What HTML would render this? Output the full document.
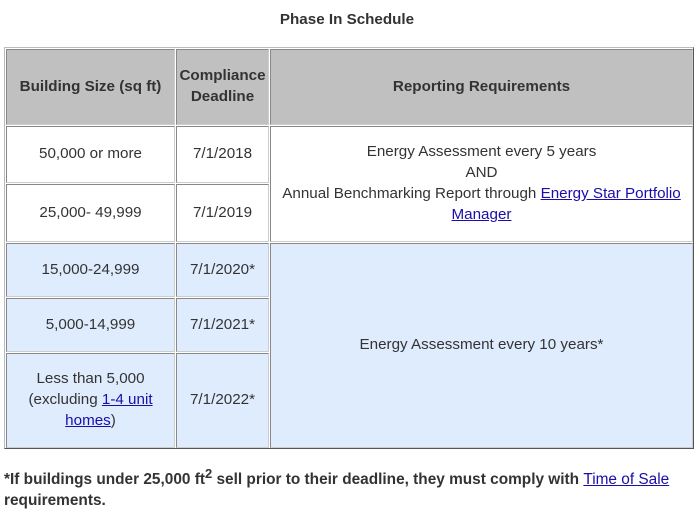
<!DOCTYPE html>
<html><head><style>
body{margin:0;background:#fff;font-family:"Liberation Sans",Arial,sans-serif;color:#333;width:700px;height:520px;position:relative;overflow:hidden}
.t{position:absolute;left:4px;top:47px;width:688px;height:400px;border:1px solid;border-color:#bbb #555 #555 #bbb}
.c{position:absolute;box-sizing:border-box;border:1px solid;border-color:#888 #ccc #ccc #888;display:flex;align-items:center;justify-content:center;text-align:center;font-size:15.2px;line-height:21px}
.c>div{width:100%;margin-top:-2px}
.h{background:#c0c0c0;font-weight:bold;color:#333}
.w{background:#fff}
.b{background:#dfecfe}
a{color:#1a0dab;text-decoration:underline}
</style></head><body>
<div style="position:absolute;left:0;width:694px;top:11px;text-align:center;font-weight:bold;font-size:15.2px">Phase In Schedule</div>
<div class="t"></div>
<div class="c h" style="left:6px;top:49px;width:169px;height:76px"><div>Building Size (sq ft)</div></div>
<div class="c h" style="left:176px;top:49px;width:93px;height:76px"><div>Compliance<br>Deadline</div></div>
<div class="c h" style="left:270px;top:49px;width:423px;height:76px"><div>Reporting Requirements</div></div>

<div class="c w" style="left:6px;top:126px;width:169px;height:57px"><div>50,000 or more</div></div>
<div class="c w" style="left:176px;top:126px;width:93px;height:57px"><div>7/1/2018</div></div>
<div class="c w" style="left:6px;top:184px;width:169px;height:58px"><div>25,000- 49,999</div></div>
<div class="c w" style="left:176px;top:184px;width:93px;height:58px"><div>7/1/2019</div></div>
<div class="c w" style="left:270px;top:126px;width:423px;height:116px"><div>Energy Assessment every 5 years<br>AND<br>Annual Benchmarking Report through <a>Energy Star Portfolio</a><br><a>Manager</a></div></div>

<div class="c b" style="left:6px;top:243px;width:169px;height:54px"><div>15,000-24,999</div></div>
<div class="c b" style="left:176px;top:243px;width:93px;height:54px"><div>7/1/2020*</div></div>
<div class="c b" style="left:6px;top:298px;width:169px;height:54px"><div>5,000-14,999</div></div>
<div class="c b" style="left:176px;top:298px;width:93px;height:54px"><div>7/1/2021*</div></div>
<div class="c b" style="left:6px;top:353px;width:169px;height:95px"><div>Less than 5,000<br>(excluding <a>1-4 unit</a><br><a>homes</a>)</div></div>
<div class="c b" style="left:176px;top:353px;width:93px;height:95px"><div>7/1/2022*</div></div>
<div class="c b" style="left:270px;top:243px;width:423px;height:205px"><div>Energy Assessment every 10 years*</div></div>

<div style="position:absolute;left:4px;top:469px;font-size:15.4px;line-height:21px;font-weight:bold;width:694px">*If buildings under 25,000 ft<sup style="font-size:13px;line-height:0">2</sup> sell prior to their deadline, they must comply with <a style="font-weight:normal">Time of Sale</a><br>requirements.</div>
</body></html>
